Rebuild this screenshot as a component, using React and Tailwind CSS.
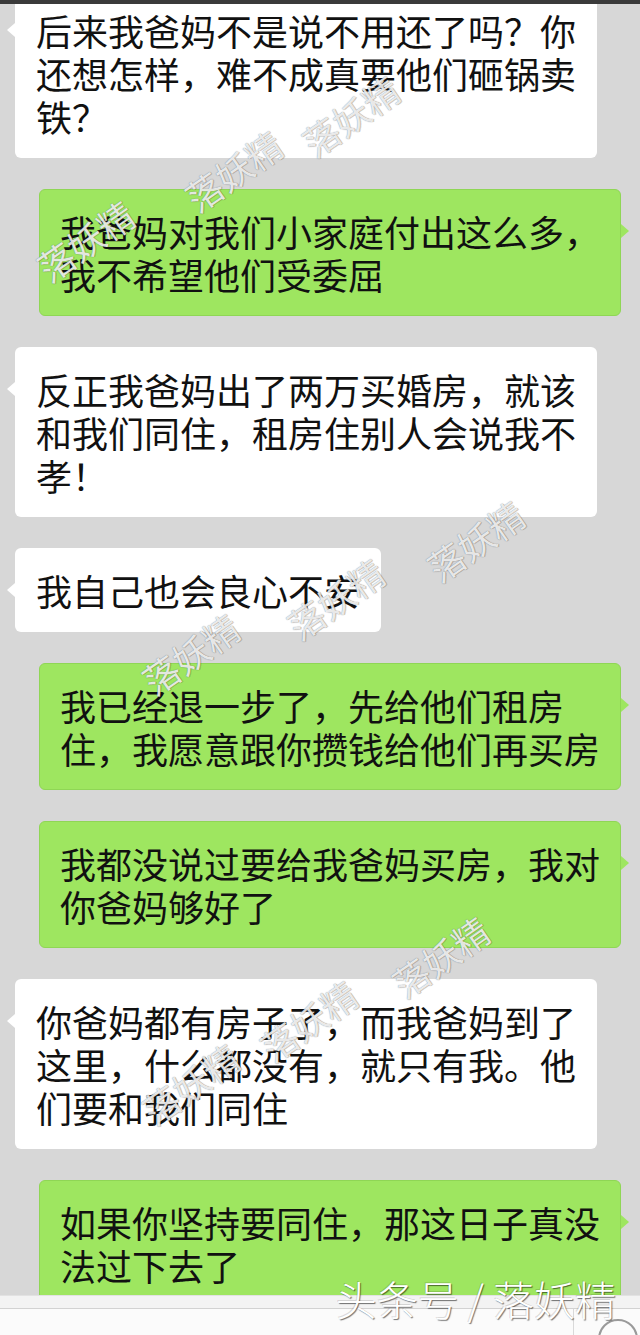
import React from 'react'

const messages = [
  { side: 'left', first: true, lines: ['后来我爸妈不是说不用还了吗？你', '还想怎样，难不成真要他们砸锅卖', '铁？'] },
  { side: 'right', lines: ['我爸妈对我们小家庭付出这么多，', '我不希望他们受委屈'] },
  { side: 'left', lines: ['反正我爸妈出了两万买婚房，就该', '和我们同住，租房住别人会说我不', '孝！'] },
  { side: 'left', lines: ['我自己也会良心不安'] },
  { side: 'right', lines: ['我已经退一步了，先给他们租房', '住，我愿意跟你攒钱给他们再买房'] },
  { side: 'right', lines: ['我都没说过要给我爸妈买房，我对', '你爸妈够好了'] },
  { side: 'left', lines: ['你爸妈都有房子了，而我爸妈到了', '这里，什么都没有，就只有我。他', '们要和我们同住'] },
  { side: 'right', lines: ['如果你坚持要同住，那这日子真没', '法过下去了'] },
]

// watermark centres, read off the screenshot
const marks = [
  'left-[350px] top-[115px]',
  'left-[233px] top-[170px]',
  'left-[85px] top-[240px]',
  'left-[475px] top-[540px]',
  'left-[335px] top-[598px]',
  'left-[190px] top-[653px]',
  'left-[440px] top-[956px]',
  'left-[308px] top-[1020px]',
  'left-[190px] top-[1083px]',
]

function Bubble({ side, lines, first }) {
  const isLeft = side === 'left'
  return (
    <div className={`flex ${isLeft ? 'justify-start pl-[15px]' : 'justify-end pr-[19px]'}`}>
      <div
        className={`relative ${isLeft ? 'bg-white px-[21px] pt-[21px] pb-[20px]' : 'bg-[#9ee660] border border-[#8fd655] px-[20px] pt-[20px] pb-[19px]'} ${first ? '!pt-[5px] rounded-b-[6px]' : 'rounded-[6px]'}`}
      >
        {isLeft ? (
          <span className={`absolute left-[-8px] ${first ? 'top-[19px]' : 'top-[35px]'} w-0 h-0 border-y-[7px] border-y-transparent border-r-[8px] border-r-white`} />
        ) : (
          <span className="absolute right-[-9px] top-[34px] w-0 h-0 border-y-[7px] border-y-transparent border-l-[8px] border-l-[#9ee660]" />
        )}
        {lines.map((l, i) => (
          <div key={i} className="whitespace-nowrap text-[36px] leading-[43px] text-[#111]">
            {l}
          </div>
        ))}
      </div>
    </div>
  )
}

export default function App() {
  return (
    <div
      className="relative w-[640px] h-[1335px] flex flex-col overflow-hidden bg-[#d7d7d7]"
      style={{ fontFamily: '"Noto Sans CJK SC", "Noto Sans", sans-serif' }}
    >
      <div className="h-[4px] bg-[#3a3a3a] shrink-0" />

      <div className="flex-1 overflow-hidden flex flex-col gap-[31px]">
        {messages.map((m, i) => (
          <Bubble key={i} {...m} />
        ))}
      </div>

      {/* input bar */}
      <div className="h-[40px] shrink-0 bg-[#f3f3f3] border-t border-[#e2e2e2] flex flex-col">
        <div className="h-[12px]" />
        <div className="flex-1 flex border-t border-[#d2d2d2] bg-[#fbfbfb]">
          <div className="flex-1" />
          <div className="w-[67px] border-l border-[#d9d9d9] relative overflow-hidden">
            <div className="absolute left-[24px] top-[10px] w-[40px] h-[40px] rounded-full border-2 border-[#9a9a9a]" />
          </div>
        </div>
      </div>

      {/* rotated watermarks */}
      {marks.map((pos, i) => (
        <div
          key={i}
          className={`absolute ${pos} -translate-x-1/2 -translate-y-1/2 rotate-[-35deg] whitespace-nowrap text-[36px] leading-none text-white/85 pointer-events-none [text-shadow:0_0_1px_rgba(0,0,0,0.55),1px_1px_0_rgba(0,0,0,0.15)]`}
        >
          落妖精
        </div>
      ))}

      <div className="absolute right-[24px] top-[1274px] whitespace-nowrap text-[41px] leading-[48px] font-light text-white pointer-events-none [text-shadow:1px_1px_1px_rgba(0,0,0,0.55),-1px_-1px_0_rgba(0,0,0,0.12)]">
        头条号 / 落妖精
      </div>
    </div>
  )
}
